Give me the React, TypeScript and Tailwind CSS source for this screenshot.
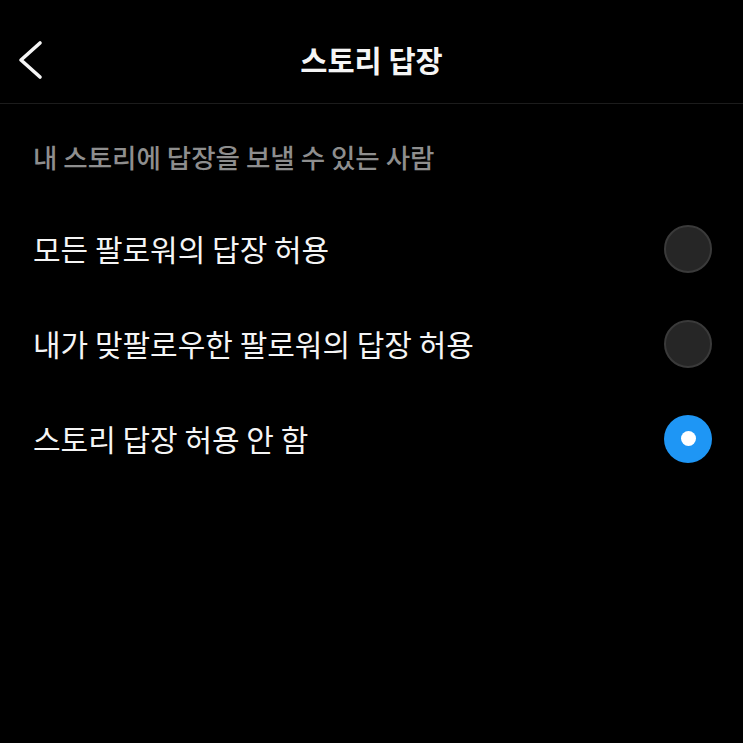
import React, { useState } from 'react';

const options = [
  { value: 'everyone', label: '모든 팔로워의 답장 허용' },
  { value: 'mutual', label: '내가 맞팔로우한 팔로워의 답장 허용' },
  { value: 'off', label: '스토리 답장 허용 안 함' },
];

const font = { fontFamily: '"Noto Sans CJK KR", "Noto Sans", sans-serif' };

const App: React.FC = () => {
  const [selected, setSelected] = useState('off');

  return (
    <div className="min-h-[743px] w-full bg-black text-[#f5f5f5]" style={font}>
      <header className="grid grid-cols-[70px_1fr_70px] items-center h-[104px] pt-[16px] border-b border-[#1c1c1c]">
        <button type="button" className="flex items-center pl-[15px]">
          <svg width="30" height="40" viewBox="0 0 30 40" fill="none">
            <path d="M25 3 L6 20 L25 37" stroke="#f5f5f5" strokeWidth="3.6" strokeLinecap="round" strokeLinejoin="round" />
          </svg>
        </button>
        <h1 className="text-center text-[29.5px] font-bold leading-none">스토리 답장</h1>
        <div />
      </header>

      <p className="mt-[36px] px-[33px] text-[26.5px] leading-[34px] font-medium text-[#8e8e8e]">
        내 스토리에 답장을 보낼 수 있는 사람
      </p>

      <div className="mt-[27px] flex flex-col">
        {options.map(opt => {
          const on = selected === opt.value;
          return (
            <label
              key={opt.value}
              onClick={() => setSelected(opt.value)}
              className="flex items-center justify-between h-[95px] pl-[33px] pr-[31px] cursor-pointer"
            >
              <span className="text-[30px] leading-none pb-[2px]">{opt.label}</span>
              {on ? (
                <span className="flex items-center justify-center w-[48px] h-[48px] rounded-full bg-[#1e96f5]">
                  <span className="w-[15px] h-[15px] rounded-full bg-white" />
                </span>
              ) : (
                <span className="w-[48px] h-[48px] rounded-full bg-[#262626] border-2 border-[#3a3a3a]" />
              )}
            </label>
          );
        })}
      </div>
    </div>
  );
};

export default App;
